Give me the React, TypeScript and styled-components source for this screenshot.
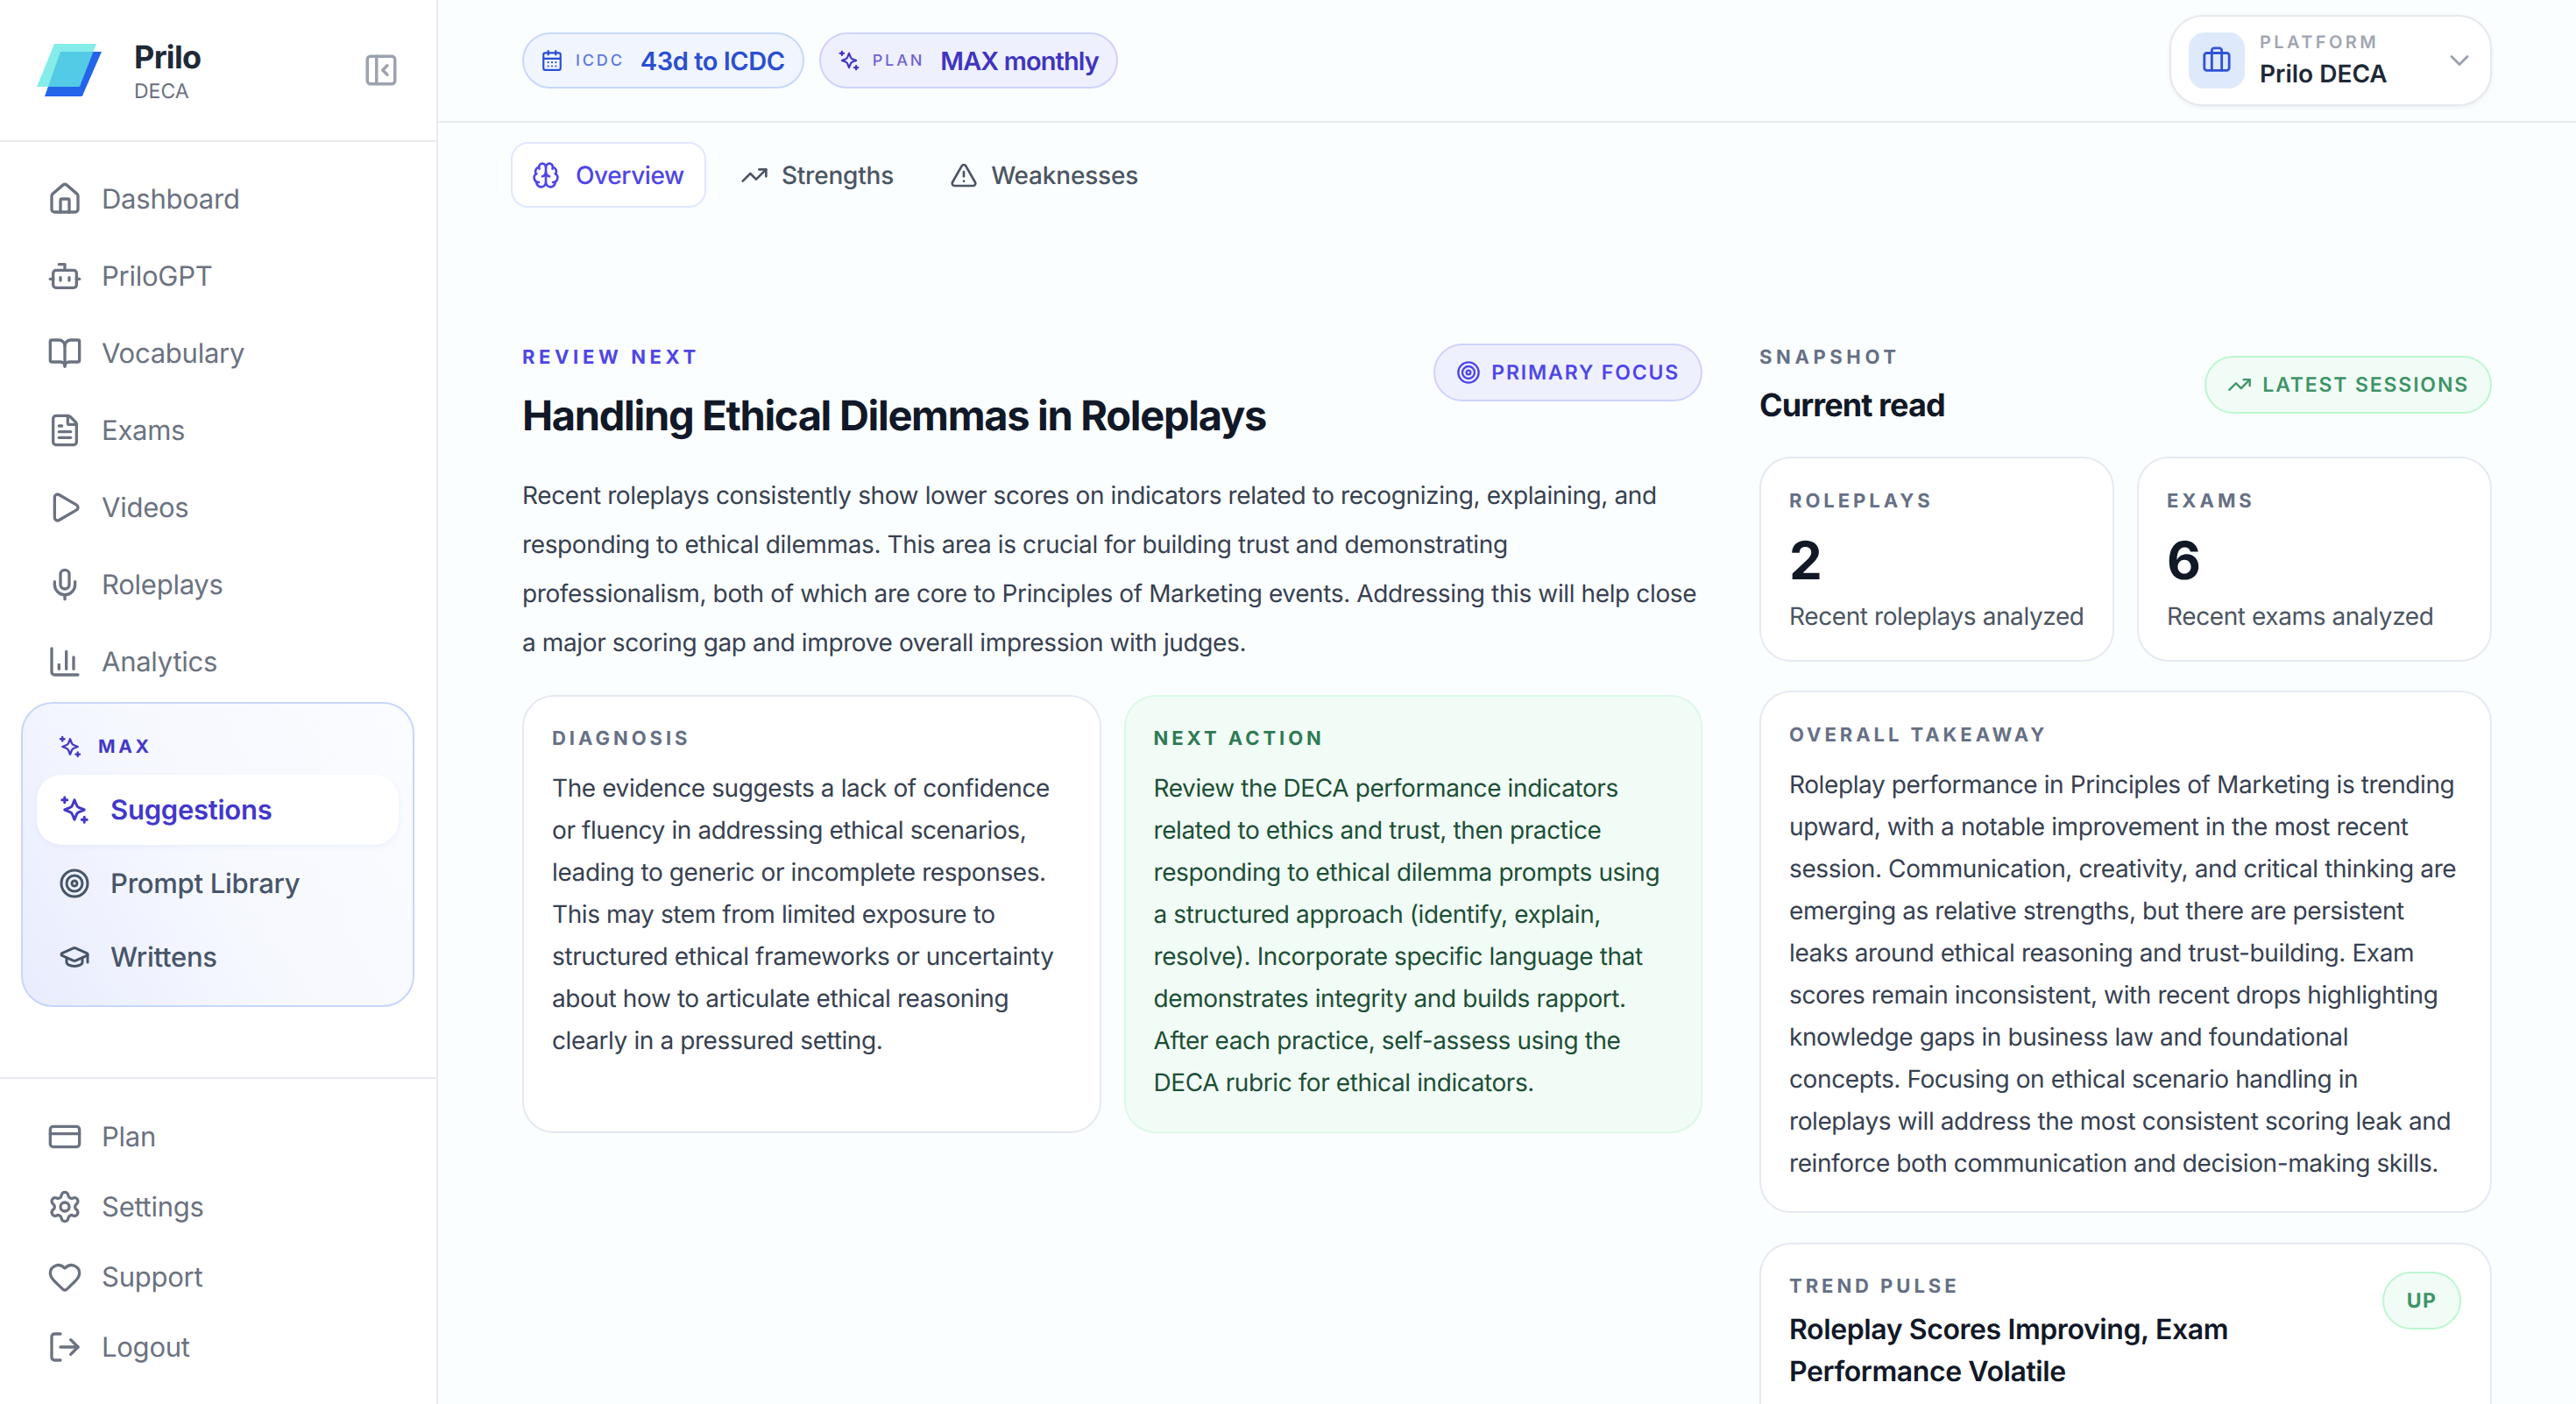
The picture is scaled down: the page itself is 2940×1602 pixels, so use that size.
import React from "react";
import styled, { createGlobalStyle } from "styled-components";
import {
  BookOpen,
  Bot,
  Brain,
  Briefcase,
  CalendarDays,
  ChartColumn,
  ChevronDown,
  CreditCard,
  FileText,
  GraduationCap,
  Heart,
  House,
  LogOut,
  Mic,
  PanelLeftClose,
  Play,
  Settings,
  Target,
  TrendingUp,
  TriangleAlert,
} from "lucide-react";

const GlobalStyle = createGlobalStyle`
  html, body {
    margin: 0;
    height: 1602px;
    overflow: hidden;
    background: #fbfeff;
    font-family: Inter, "Liberation Sans", sans-serif;
    text-rendering: geometricPrecision;
    -webkit-font-smoothing: antialiased;
  }
`;

const Sparkle: React.FC<{ size: number }> = ({ size }) => (
  <svg width={size} height={size} viewBox="0 0 24 24" fill="none" stroke="currentColor" strokeWidth="2" strokeLinecap="round" strokeLinejoin="round">
    <path d="M12 4.5l1.7 4.2a3 3 0 0 0 1.6 1.6l4.2 1.7-4.2 1.7a3 3 0 0 0-1.6 1.6L12 19.5l-1.7-4.2a3 3 0 0 0-1.6-1.6l-4.2-1.7 4.2-1.7a3 3 0 0 0 1.6-1.6z" />
    <path d="M4.5 2.5v4M2.5 4.5h4M19.5 17.5v4M17.5 19.5h4" />
  </svg>
);

const Logo = () => (
  <svg width="76" height="60" viewBox="0 0 76 60">
    <path d="M27 9h47L53 57a3 3 0 0 1-3 3H9z" fill="#2563eb" />
    <path d="M20 0h48L50 46a3 3 0 0 1-3 3H0z" fill="#62e8e4" fillOpacity="0.78" />
  </svg>
);

const mainNav = [
  { label: "Dashboard", icon: House },
  { label: "PriloGPT", icon: Bot },
  { label: "Vocabulary", icon: BookOpen },
  { label: "Exams", icon: FileText },
  { label: "Videos", icon: Play },
  { label: "Roleplays", icon: Mic },
  { label: "Analytics", icon: ChartColumn },
];

const footerNav = [
  { label: "Plan", icon: CreditCard },
  { label: "Settings", icon: Settings },
  { label: "Support", icon: Heart },
  { label: "Logout", icon: LogOut },
];

export default function App() {
  return (
    <Shell>
      <GlobalStyle />
      <Sidebar>
        <Brand>
          <Logo />
          <BrandText>
            <BrandName>Prilo</BrandName>
            <BrandSub>DECA</BrandSub>
          </BrandText>
          <CollapseButton>
            <PanelLeftClose size={42} strokeWidth={2} />
          </CollapseButton>
        </Brand>
        <MainNav>
          {mainNav.map(({ label, icon: Icon }) => (
            <NavItem key={label}>
              <Icon size={40} strokeWidth={2} />
              {label}
            </NavItem>
          ))}
        </MainNav>
        <MaxGroup>
          <MaxLabel>
            <Sparkle size={28} />
            MAX
          </MaxLabel>
          <MaxItem $active>
            <Sparkle size={36} />
            Suggestions
          </MaxItem>
          <MaxItem>
            <Target size={36} strokeWidth={2} />
            Prompt Library
          </MaxItem>
          <MaxItem>
            <GraduationCap size={36} strokeWidth={2} />
            Writtens
          </MaxItem>
        </MaxGroup>
        <FooterNav>
          {footerNav.map(({ label, icon: Icon }) => (
            <NavItem key={label} $compact>
              <Icon size={40} strokeWidth={2} />
              {label}
            </NavItem>
          ))}
        </FooterNav>
      </Sidebar>

      <Main>
        <TopBar>
          <Pills>
            <StatusPill $tone="blue">
              <CalendarDays size={26} strokeWidth={2} />
              <StatusKey>ICDC</StatusKey>
              <StatusValue>43d to ICDC</StatusValue>
            </StatusPill>
            <StatusPill $tone="indigo">
              <Sparkle size={26} />
              <StatusKey>PLAN</StatusKey>
              <StatusValue $tight>MAX monthly</StatusValue>
            </StatusPill>
          </Pills>
          <PlatformSelect>
            <PlatformIcon>
              <Briefcase size={34} strokeWidth={2} />
            </PlatformIcon>
            <PlatformText>
              <PlatformLabel>PLATFORM</PlatformLabel>
              <PlatformValue>Prilo DECA</PlatformValue>
            </PlatformText>
            <PlatformChevron>
              <ChevronDown size={36} strokeWidth={2} />
            </PlatformChevron>
          </PlatformSelect>
        </TopBar>

        <Tabs>
          <Tab $active>
            <Brain size={32} strokeWidth={2} />
            Overview
          </Tab>
          <Tab>
            <TrendingUp size={32} strokeWidth={2} />
            Strengths
          </Tab>
          <Tab>
            <TriangleAlert size={32} strokeWidth={2} />
            Weaknesses
          </Tab>
        </Tabs>

        <Content>
          <LeftColumn>
            <FocusHeader>
              <div>
                <Eyebrow $color="#4f46e5">REVIEW NEXT</Eyebrow>
                <Headline>Handling Ethical Dilemmas in Roleplays</Headline>
              </div>
              <Badge $tone="indigo">
                <Target size={28} strokeWidth={2} />
                PRIMARY FOCUS
              </Badge>
            </FocusHeader>
            <Lead>
              Recent roleplays consistently show lower scores on indicators related to recognizing, explaining, and
              responding to ethical dilemmas. This area is crucial for building trust and demonstrating
              <br />
              professionalism, both of which are core to Principles of Marketing events. Addressing this will help close
              a major scoring gap and improve overall impression with judges.
            </Lead>
            <TwoCards>
              <Card>
                <CardLabel>DIAGNOSIS</CardLabel>
                <CardBody>
                  The evidence suggests a lack of confidence or fluency in addressing ethical scenarios, leading to
                  generic or incomplete responses. This may stem from limited exposure to structured ethical frameworks
                  or uncertainty about how to articulate ethical reasoning clearly in a pressured setting.
                </CardBody>
              </Card>
              <Card $green>
                <CardLabel $color="#2f7a55">NEXT ACTION</CardLabel>
                <CardBody $color="#1d4f37">
                  Review the DECA performance indicators related to ethics and trust, then practice responding to
                  ethical dilemma prompts using a structured approach (identify, explain, resolve). Incorporate specific
                  language that demonstrates integrity and builds rapport. After each practice, self-assess using the
                  DECA rubric for ethical indicators.
                </CardBody>
              </Card>
            </TwoCards>
          </LeftColumn>

          <RightColumn>
            <SnapshotHeader>
              <div>
                <Eyebrow $color="#667085">SNAPSHOT</Eyebrow>
                <SnapshotTitle>Current read</SnapshotTitle>
              </div>
              <Badge $tone="green">
                <TrendingUp size={28} strokeWidth={2} />
                LATEST SESSIONS
              </Badge>
            </SnapshotHeader>
            <StatGrid>
              <StatCard>
                <CardLabel>ROLEPLAYS</CardLabel>
                <StatNumber>2</StatNumber>
                <StatText>Recent roleplays analyzed</StatText>
              </StatCard>
              <StatCard>
                <CardLabel>EXAMS</CardLabel>
                <StatNumber>6</StatNumber>
                <StatText>Recent exams analyzed</StatText>
              </StatCard>
            </StatGrid>
            <TakeawayCard>
              <CardLabel>OVERALL TAKEAWAY</CardLabel>
              <CardBody>
                Roleplay performance in Principles of Marketing is trending upward, with a notable improvement in the
                most recent session. Communication, creativity, and critical thinking are emerging as relative strengths,
                but there are persistent leaks around ethical reasoning and trust-building. Exam scores remain
                inconsistent, with recent drops highlighting knowledge gaps in business law and foundational concepts.
                Focusing on ethical scenario handling in roleplays will address the most consistent scoring leak and
                reinforce both communication and decision-making skills.
              </CardBody>
            </TakeawayCard>
            <TrendCard>
              <TrendText>
                <CardLabel>TREND PULSE</CardLabel>
                <TrendTitle>Roleplay Scores Improving, Exam Performance Volatile</TrendTitle>
              </TrendText>
              <UpBadge>UP</UpBadge>
            </TrendCard>
          </RightColumn>
        </Content>
      </Main>
    </Shell>
  );
}

const Shell = styled.div`
  display: grid;
  grid-template-columns: 500px 1fr;
  height: 1602px;
  overflow: hidden;
`;

const Sidebar = styled.aside`
  display: flex;
  flex-direction: column;
  background: #ffffff;
  border-right: 2px solid #e8eaef;
  height: 1602px;
`;

const Brand = styled.div`
  display: flex;
  align-items: center;
  height: 162px;
  flex: none;
  padding: 0 42px 0 42px;
  border-bottom: 2px solid #e8eaef;
  box-sizing: border-box;
`;

const BrandText = styled.div`
  margin-left: 35px;
  display: flex;
  flex-direction: column;
  padding-top: 2px;
`;

const BrandName = styled.div`
  font-size: 36px;
  line-height: 44px;
  font-weight: 700;
  letter-spacing: -0.7px;
  color: #1f2937;
`;

const BrandSub = styled.div`
  margin-top: 2px;
  font-size: 23px;
  line-height: 30px;
  color: #6b7280;
`;

const CollapseButton = styled.div`
  display: flex;
  margin-left: auto;
  color: #9ca3af;
`;

const MainNav = styled.nav`
  display: flex;
  flex-direction: column;
  padding: 21px 0 0 54px;
`;

const NavItem = styled.div<{ $compact?: boolean }>`
  display: flex;
  align-items: center;
  gap: 22px;
  height: ${(p) => (p.$compact ? 80 : 88)}px;
  font-size: 31px;
  letter-spacing: -0.25px;
  color: #6b7280;
`;

const MaxGroup = styled.div`
  display: flex;
  flex-direction: column;
  margin: 2px 25px 0 24px;
  padding: 0 16px 14px 16px;
  height: 348px;
  box-sizing: border-box;
  border: 2px solid #c7d6fb;
  border-radius: 36px;
  background: linear-gradient(60deg, #e8ecfd 0%, #f6f8ff 45%, #fafcff 100%);
`;

const MaxLabel = styled.div`
  display: flex;
  align-items: center;
  gap: 18px;
  height: 81px;
  flex: none;
  box-sizing: border-box;
  padding: 17px 0 0 24px;
  font-size: 21px;
  font-weight: 700;
  letter-spacing: 0.17em;
  color: #4338ca;
`;

const MaxItem = styled.div<{ $active?: boolean }>`
  display: flex;
  align-items: center;
  gap: 23px;
  height: ${(p) => (p.$active ? 80 : 84)}px;
  flex: none;
  padding-left: 25px;
  border-radius: 28px;
  font-size: 31px;
  letter-spacing: -0.25px;
  font-weight: ${(p) => (p.$active ? 600 : 500)};
  color: ${(p) => (p.$active ? "#4338ca" : "#475569")};
  background: ${(p) => (p.$active ? "#ffffff" : "transparent")};
  box-shadow: ${(p) => (p.$active ? "0 2px 6px rgba(99, 102, 241, 0.08)" : "none")};
  margin-bottom: ${(p) => (p.$active ? 2 : 0)}px;
`;

const FooterNav = styled.nav`
  display: flex;
  flex-direction: column;
  margin-top: auto;
  padding: 26px 0 25px 54px;
  border-top: 2px solid #e8eaef;
`;

const Main = styled.main`
  display: flex;
  flex-direction: column;
  min-width: 0;
`;

const TopBar = styled.header`
  display: flex;
  align-items: center;
  justify-content: space-between;
  height: 140px;
  flex: none;
  box-sizing: border-box;
  padding: 0 96px;
  border-bottom: 2px solid #e8ecf1;
`;

const Pills = styled.div`
  display: flex;
  gap: 17px;
`;

const StatusPill = styled.div<{ $tone: "blue" | "indigo" }>`
  display: flex;
  align-items: center;
  height: 64px;
  box-sizing: border-box;
  padding: 0 20px 0 19px;
  border-radius: 32px;
  border: 2px solid ${(p) => (p.$tone === "blue" ? "#c7d8fb" : "#cdd3fb")};
  background: ${(p) => (p.$tone === "blue" ? "#f1f5fe" : "#eff0fe")};
  color: ${(p) => (p.$tone === "blue" ? "#2a4fcf" : "#3f35c0")};
`;

const StatusKey = styled.span`
  margin: 0 18px 0 14px;
  font-size: 18px;
  font-weight: 500;
  letter-spacing: 0.16em;
  opacity: 0.75;
`;

const StatusValue = styled.span<{ $tight?: boolean }>`
  font-size: 29px;
  font-weight: 600;
  letter-spacing: ${(p) => (p.$tight ? -0.9 : -0.45)}px;
`;

const PlatformSelect = styled.div`
  display: flex;
  align-items: center;
  width: 368px;
  height: 104px;
  box-sizing: border-box;
  padding: 0 17px 0 20px;
  border-radius: 38px;
  border: 2px solid #e6e8ee;
  background: #ffffff;
  box-shadow: 0 2px 5px rgba(17, 24, 39, 0.06);
`;

const PlatformIcon = styled.div`
  display: flex;
  align-items: center;
  justify-content: center;
  width: 64px;
  height: 64px;
  border-radius: 18px;
  background: #dfe9fc;
  color: #2f55d4;
`;

const PlatformText = styled.div`
  margin-left: 17px;
  display: flex;
  flex-direction: column;
`;

const PlatformLabel = styled.span`
  font-size: 20px;
  line-height: 26px;
  font-weight: 600;
  letter-spacing: 0.17em;
  color: #a1a6b2;
`;

const PlatformValue = styled.span`
  margin-top: 4px;
  font-size: 28px;
  line-height: 38px;
  font-weight: 600;
  color: #1f2937;
`;

const PlatformChevron = styled.div`
  display: flex;
  margin-left: auto;
  color: #9ca3af;
`;

const Tabs = styled.div`
  display: flex;
  align-items: center;
  flex: none;
  gap: 15px;
  padding: 22px 0 0 83px;
`;

const Tab = styled.div<{ $active?: boolean }>`
  display: flex;
  align-items: center;
  gap: ${(p) => (p.$active ? 18 : 15)}px;
  height: 75px;
  box-sizing: border-box;
  padding: 0 23px 0 22px;
  border-radius: 20px;
  border: 2px solid ${(p) => (p.$active ? "#e0e7ff" : "transparent")};
  background: ${(p) => (p.$active ? "#ffffff" : "transparent")};
  color: ${(p) => (p.$active ? "#4f46e5" : "#4b5563")};
  font-size: 28px;
  letter-spacing: ${(p) => (p.$active ? -0.4 : -0.2)}px;
  font-weight: 500;
`;

const Content = styled.div`
  display: grid;
  grid-template-columns: 1347px 836px;
  gap: 65px;
  padding: 155px 96px 0 96px;
  align-items: start;
`;

const LeftColumn = styled.section`
  display: flex;
  flex-direction: column;
`;

const FocusHeader = styled.div`
  display: flex;
  justify-content: space-between;
  align-items: flex-start;
`;

const Eyebrow = styled.div<{ $color: string }>`
  font-size: 22px;
  line-height: 32px;
  font-weight: 700;
  letter-spacing: 0.21em;
  color: ${(p) => p.$color};
`;

const Headline = styled.h1`
  margin: 21px 0 0;
  font-size: 47px;
  line-height: 60px;
  font-weight: 700;
  letter-spacing: -1.3px;
  color: #111827;
`;

const Badge = styled.div<{ $tone: "indigo" | "green" }>`
  display: flex;
  align-items: center;
  gap: 12px;
  flex: none;
  height: 66px;
  box-sizing: border-box;
  padding: 0 24px;
  border-radius: 33px;
  font-size: 23px;
  font-weight: 600;
  letter-spacing: 0.08em;
  border: 2px solid ${(p) => (p.$tone === "indigo" ? "#cdd3fb" : "#bbf7d0")};
  background: ${(p) => (p.$tone === "indigo" ? "#eff0fe" : "#f2fcf6")};
  color: ${(p) => (p.$tone === "indigo" ? "#4f46e5" : "#3f9468")};
`;

const Lead = styled.p`
  margin: 32px 0 0;
  font-size: 28px;
  letter-spacing: -0.38px;
  line-height: 56px;
  color: #374151;
`;

const TwoCards = styled.div`
  display: grid;
  grid-template-columns: 1fr 1fr;
  gap: 26px;
  margin-top: 32px;
`;

const Card = styled.div<{ $green?: boolean }>`
  height: 500px;
  box-sizing: border-box;
  padding: 32px 32px 0;
  border-radius: 36px;
  border: 2px solid ${(p) => (p.$green ? "#dcf8e7" : "#e6e9f2")};
  background: ${(p) => (p.$green ? "#f2fcf6" : "#ffffff")};
`;

const CardLabel = styled.div<{ $color?: string }>`
  font-size: 22px;
  line-height: 32px;
  font-weight: 700;
  letter-spacing: 0.18em;
  color: ${(p) => p.$color ?? "#667085"};
`;

const CardBody = styled.p<{ $color?: string }>`
  margin: 16px 0 0;
  font-size: 28px;
  letter-spacing: -0.4px;
  line-height: 48px;
  color: ${(p) => p.$color ?? "#374151"};
`;

const RightColumn = styled.section`
  display: flex;
  flex-direction: column;
`;

const SnapshotHeader = styled.div`
  display: flex;
  justify-content: space-between;
  align-items: center;
`;

const SnapshotTitle = styled.h2`
  margin: 15px 0 0;
  font-size: 36px;
  line-height: 46px;
  font-weight: 700;
  letter-spacing: -0.9px;
  color: #111827;
`;

const StatGrid = styled.div`
  display: grid;
  grid-template-columns: 1fr 1fr;
  gap: 26px;
  margin-top: 36px;
`;

const StatCard = styled.div`
  height: 234px;
  box-sizing: border-box;
  padding: 33px 32px 0;
  border-radius: 36px;
  border: 2px solid #e6e9f2;
  background: #ffffff;
`;

const StatNumber = styled.div`
  margin-top: 17px;
  font-size: 60px;
  line-height: 70px;
  font-weight: 700;
  color: #111827;
`;

const StatText = styled.div`
  margin-top: 8px;
  font-size: 28px;
  letter-spacing: -0.4px;
  line-height: 40px;
  white-space: nowrap;
  color: #4b5563;
`;

const TakeawayCard = styled.div`
  margin-top: 33px;
  height: 596px;
  box-sizing: border-box;
  padding: 33px 32px 0;
  border-radius: 36px;
  border: 2px solid #e6e9f2;
  background: #ffffff;
`;

const TrendCard = styled.div`
  display: flex;
  justify-content: space-between;
  align-items: flex-start;
  margin-top: 34px;
  height: 300px;
  box-sizing: border-box;
  padding: 32px 33px 0 32px;
  border-radius: 36px;
  border: 2px solid #e6e9f2;
  background: #ffffff;
`;

const TrendText = styled.div`
  display: flex;
  flex-direction: column;
  max-width: 600px;
`;

const TrendTitle = styled.div`
  margin-top: 9px;
  font-size: 32px;
  letter-spacing: -0.4px;
  line-height: 48px;
  font-weight: 600;
  color: #111827;
`;

const UpBadge = styled.div`
  display: flex;
  align-items: center;
  justify-content: center;
  flex: none;
  margin-top: -1px;
  width: 90px;
  height: 66px;
  box-sizing: border-box;
  border-radius: 33px;
  border: 2px solid #bbf7d0;
  background: #f2fcf6;
  color: #3f9468;
  font-size: 23px;
  font-weight: 700;
  letter-spacing: 0.06em;
`;
